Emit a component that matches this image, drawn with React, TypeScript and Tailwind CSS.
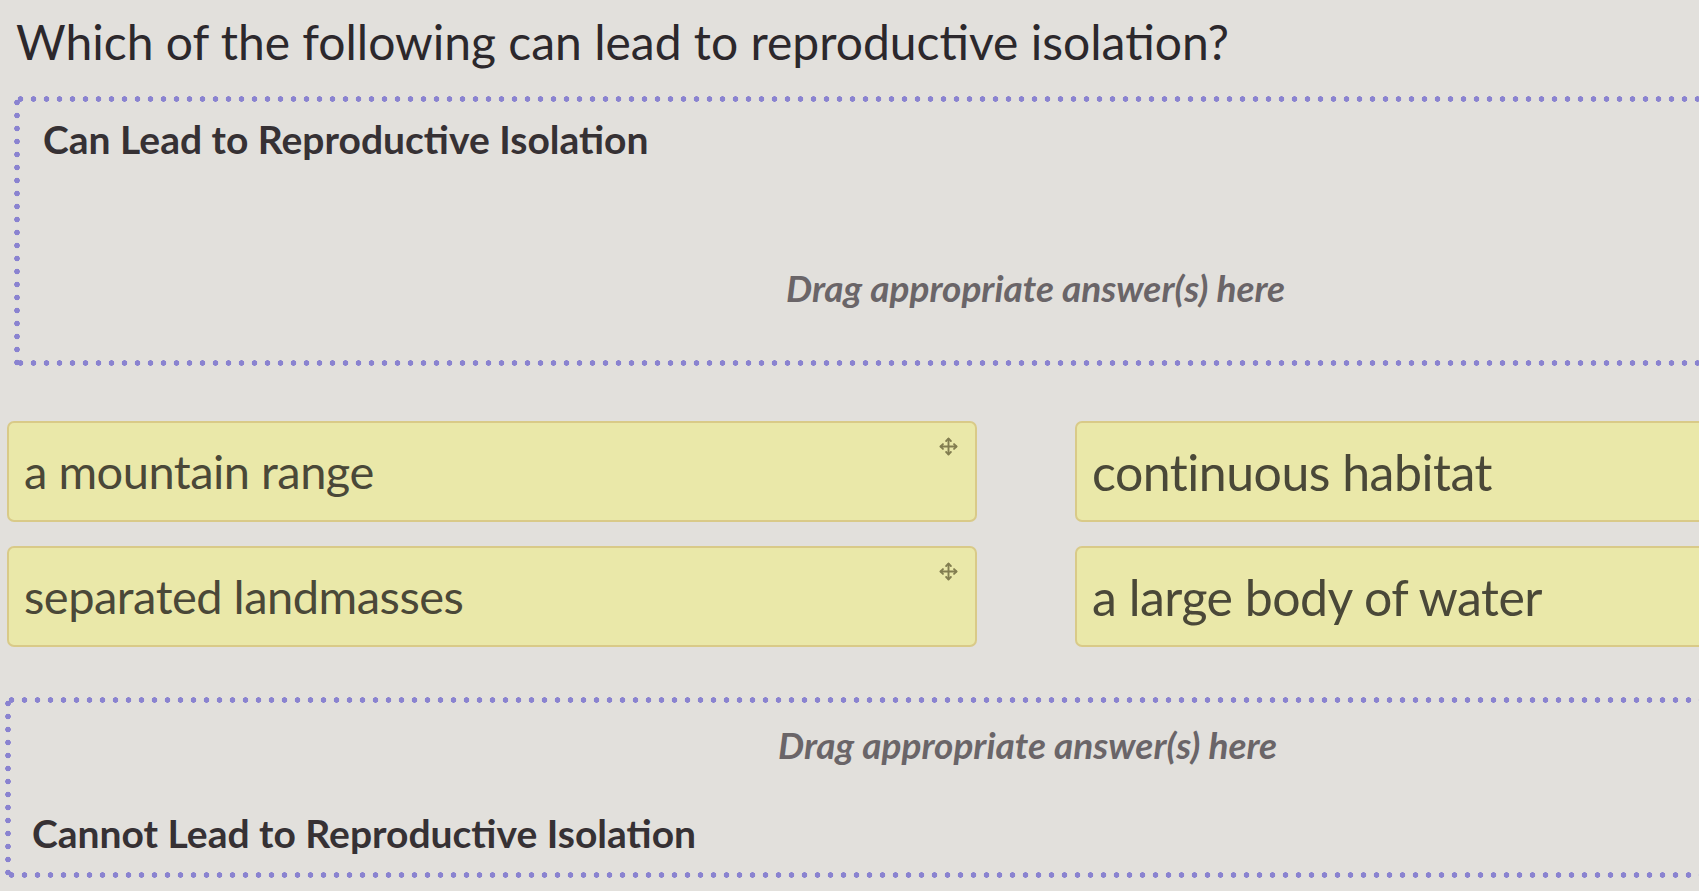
import React from "react";
import { Move } from "lucide-react";

const dotted =
  "[background-image:radial-gradient(circle,#8a83d0_2.5px,transparent_3.1px),radial-gradient(circle,#8a83d0_2.5px,transparent_3.1px),radial-gradient(circle,#8a83d0_2.5px,transparent_3.1px)] [background-position:0_0,0_100%,0_0] [background-size:13px_6px,13px_6px,6px_13px] [background-repeat:repeat-x,repeat-x,repeat-y]";

function Card({ text, icon, big }: { text: string; icon?: boolean; big?: boolean }) {
  return (
    <div className="relative h-[101px] rounded-[7px] border-2 border-[#d9ca88] bg-[#eae8a9] flex items-center pl-[15px]">
      <span
        className={
          big
            ? "text-[50px] leading-none text-[#4a4838] font-['Lato',sans-serif] tracking-[-0.5px]"
            : "text-[47px] leading-none text-[#4a4838] font-['Lato',sans-serif] tracking-[-0.5px]"
        }
      >
        {text}
      </span>
      {icon && (
        <Move className="absolute top-[14px] right-[17px] text-[#827d50]" size={19} strokeWidth={2.4} />
      )}
    </div>
  );
}

export default function App() {
  return (
    <div className="w-[1699px] h-[891px] overflow-hidden bg-[#e2e0dc] font-['Lato',sans-serif] flex flex-col">
      <h1 className="pt-[13px] pl-[16px] text-[48px] leading-[58px] text-[#2c282c] font-normal whitespace-nowrap">
        Which of the following can lead to reproductive isolation?
      </h1>

      <div className={`mt-[25px] ml-[14px] h-[270px] w-[1800px] shrink-0 flex flex-col ${dotted}`}>
        <div className="mt-[20px] pl-[29px] text-[39px] leading-[47px] font-bold text-[#363134] whitespace-nowrap">
          Can Lead to Reproductive Isolation
        </div>
        <div className="mt-[103px] ml-[772px] text-[37px] leading-[44px] font-bold italic text-[#6a6568] whitespace-nowrap">
          Drag appropriate answer(s) here
        </div>
      </div>

      <div className="mt-[55px] ml-[7px] grid grid-cols-[970px_970px] gap-x-[98px] gap-y-[24px] shrink-0">
        <Card text="a mountain range" icon />
        <Card text="continuous habitat" big />
        <Card text="separated landmasses" icon />
        <Card text="a large body of water" big />
      </div>

      <div className={`mt-[50px] ml-[5px] h-[181px] w-[1800px] shrink-0 flex flex-col ${dotted}`}>
        <div className="mt-[26px] ml-[773px] text-[37px] leading-[44px] font-bold italic text-[#6a6568] whitespace-nowrap">
          Drag appropriate answer(s) here
        </div>
        <div className="mt-[43px] pl-[27px] text-[39px] leading-[47px] font-bold text-[#363134] whitespace-nowrap">
          Cannot Lead to Reproductive Isolation
        </div>
      </div>
    </div>
  );
}
